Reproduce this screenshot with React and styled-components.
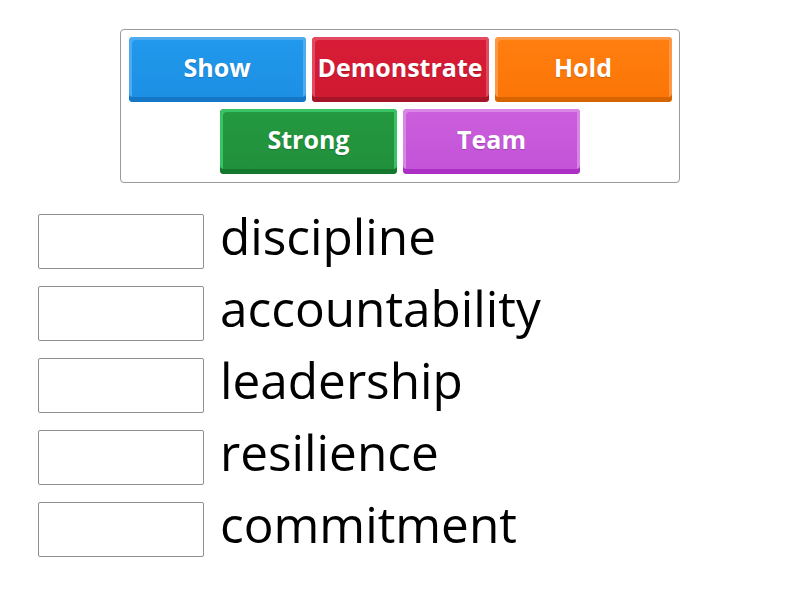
import React from "react";
import styled, { createGlobalStyle } from "styled-components";

const Global = createGlobalStyle`
  html, body { margin: 0; padding: 0; background: #fff; }
  body { font-family: "Open Sans", "Liberation Sans", sans-serif; }
`;

const Page = styled.div`
  width: 800px;
  height: 600px;
  box-sizing: border-box;
  padding-top: 29px;
  display: flex;
  flex-direction: column;
`;

const Bank = styled.div`
  box-sizing: border-box;
  width: 560px;
  margin-left: 120px;
  border: 1px solid #9a9a9a;
  border-radius: 4px;
  padding: 7px 0 8px;
  display: flex;
  flex-wrap: wrap;
  justify-content: center;
  gap: 7px 6px;
`;

const palette = {
  blue: { top: "#2199ec", face: "#1c8fe3", rim: "#4eabf0", low: "#1477c6" },
  red: { top: "#d91c37", face: "#cf1a31", rim: "#e34a5f", low: "#a51427" },
  orange: { top: "#ff7f10", face: "#fb7505", rim: "#ff9845", low: "#d66400" },
  green: { top: "#24993f", face: "#218f3d", rim: "#38c364", low: "#15772e" },
  purple: { top: "#cb5fdc", face: "#c352d8", rim: "#d986e6", low: "#aa2fc2" },
};

const Tile = styled.div`
  box-sizing: border-box;
  width: 177px;
  height: 65px;
  border-radius: 4px;
  display: flex;
  align-items: center;
  justify-content: center;
  padding-bottom: 5px;
  background: linear-gradient(${(p) => palette[p.$c].top}, ${(p) => palette[p.$c].face});
  box-shadow:
    inset 0 -5px 0 ${(p) => palette[p.$c].low},
    inset 3px 3px 0 ${(p) => palette[p.$c].rim},
    inset -3px 0 0 ${(p) => palette[p.$c].rim};
  color: #fff;
  font-family: "Open Sans", sans-serif;
  font-weight: 700;
  font-size: 25px;
  text-shadow: 0 1px 1px rgba(0, 0, 0, 0.2);
`;

const List = styled.div`
  margin-top: 31px;
  padding-left: 38px;
  display: flex;
  flex-direction: column;
  gap: 17px;
`;

const Row = styled.div`
  display: flex;
  align-items: flex-start;
  gap: 16px;
  height: 55px;
`;

const Slot = styled.div`
  box-sizing: border-box;
  width: 166px;
  height: 55px;
  border: 1px solid #8f8f8f;
  border-radius: 2px;
  background: #fff;
`;

const Word = styled.span`
  font-family: "Open Sans", sans-serif;
  font-size: 49.5px;
  color: #000;
  line-height: 50px;
  margin-top: -3px;
`;

const tiles = [
  ["Show", "blue"],
  ["Demonstrate", "red"],
  ["Hold", "orange"],
  ["Strong", "green"],
  ["Team", "purple"],
];

const words = ["discipline", "accountability", "leadership", "resilience", "commitment"];

export default function App() {
  return (
    <Page>
      <Global />
      <Bank>
        {tiles.map(([t, c]) => (
          <Tile key={t} $c={c}>{t}</Tile>
        ))}
      </Bank>
      <List>
        {words.map((w) => (
          <Row key={w}>
            <Slot />
            <Word>{w}</Word>
          </Row>
        ))}
      </List>
    </Page>
  );
}
